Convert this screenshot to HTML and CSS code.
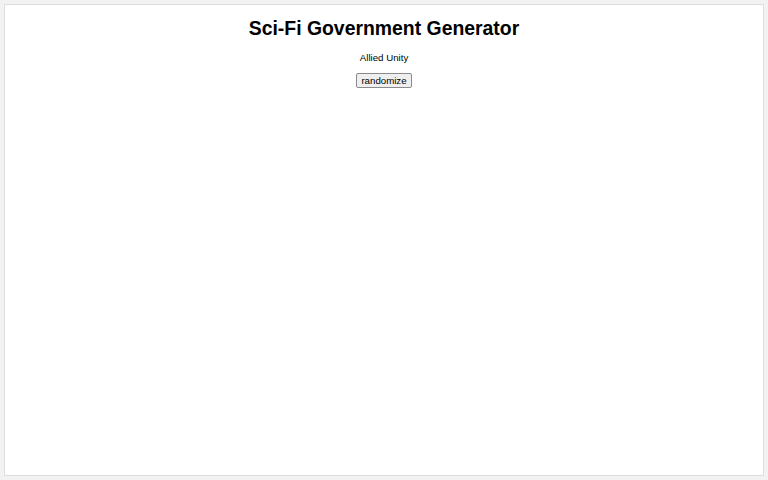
FILE: index.html
```html
<!DOCTYPE html>
<html>
<head>
<meta charset="utf-8">
<link rel="stylesheet" href="styles.css">
</head>
<body>
<main class="panel">
  <h1 class="title">Sci-Fi Government Generator</h1>
  <p class="name">Allied Unity</p>
  <button class="btn" type="button">randomize</button>
</main>
</body>
</html>
```
FILE: styles.css
```css
html, body { height: 100%; }
body {
  margin: 0;
  padding: 4px;
  box-sizing: border-box;
  background: #f2f2f2;
  font-family: "Liberation Sans", Arial, sans-serif;
}
.panel {
  box-sizing: border-box;
  height: 100%;
  background: #fff;
  border: 1px solid #dedede;
  display: flex;
  flex-direction: column;
  align-items: center;
}
.title {
  margin: 12px 0 0;
  font-size: 19.4px;
  line-height: 23px;
  font-weight: bold;
  color: #000;
}
.name {
  margin: 12px 0 0;
  font-size: 9.7px;
  line-height: 12px;
  color: #000;
}
.btn {
  margin-top: 9px;
  font-family: "Liberation Sans", Arial, sans-serif;
  font-size: 9.7px;
  line-height: 12px;
  padding: 1px 4px 0;
  border: 1px solid #8a8a8a;
  border-radius: 2px;
  background: #efefef;
  color: #000;
}
```
